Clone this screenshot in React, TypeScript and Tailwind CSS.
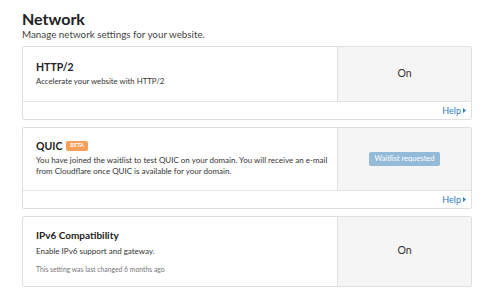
import { ReactNode } from 'react';

interface SettingCardProps {
  title: ReactNode;
  children: ReactNode;
  control: ReactNode;
  help?: boolean;
  rowHeight: string;
}

const HelpLink = () => (
  <div className="flex justify-end border-t border-[#e3e3e3] h-[18px] items-center pr-[5px]">
    <a className="text-[9px] text-[#2f7bbf] flex items-center gap-[2px] leading-none">
      Help
      <svg width="3" height="5" viewBox="0 0 3 5">
        <path d="M0 0 L3 2.5 L0 5 Z" fill="#2f7bbf" />
      </svg>
    </a>
  </div>
);

const SettingCard = ({ title, children, control, help = true, rowHeight }: SettingCardProps) => (
  <div className="border border-[#e0e0e0] rounded-[2px] bg-white">
    <div className={`flex ${rowHeight}`}>
      <div className="flex-1 pl-[13px] pr-2 flex flex-col justify-center">
        {title}
        {children}
      </div>
      <div className="w-[134px] border-l border-[#e0e0e0] bg-[#f5f5f5] flex items-center justify-center">
        {control}
      </div>
    </div>
    {help && <HelpLink />}
  </div>
);

const App = () => {
  return (
    <div className="w-[500px] h-[289px] overflow-hidden bg-white font-['Lato',sans-serif] text-[#333]">
      <div className="pl-[22px] w-[472px]">
        <h1 className="text-[16px] font-bold leading-none pt-[11px] text-[#222]">Network</h1>
        <p className="text-[9.8px] leading-none mt-[3px] text-[#444]">Manage network settings for your website.</p>

        <div className="mt-[6px] flex flex-col gap-[7px]">
          <SettingCard
            rowHeight="h-[54px]"
            title={<h2 className="text-[10.5px] font-bold leading-none text-[#222]">HTTP/2</h2>}
            control={<span className="text-[10.5px] text-[#333]">On</span>}
          >
            <p className="text-[7.8px] mt-[6px] leading-none">Accelerate your website with HTTP/2</p>
          </SettingCard>

          <SettingCard
            rowHeight="h-[62px]"
            title={
              <div className="flex items-center gap-[4px]">
                <h2 className="text-[10.5px] font-bold leading-none text-[#222]">QUIC</h2>
                <span className="bg-[#f59f5b] text-white text-[5.5px] font-bold leading-none px-[4px] h-[10px] flex items-center rounded-[2px]">
                  BETA
                </span>
              </div>
            }
            control={
              <button className="bg-[#93bad8] text-white text-[7.5px] leading-none px-[6px] h-[14px] rounded-[2px]">
                Waitlist requested
              </button>
            }
          >
            <p className="text-[8px] leading-[11px] mt-[4px] whitespace-nowrap">
              You have joined the waitlist to test QUIC on your domain. You will receive an e-mail
              <br />
              from Cloudflare once QUIC is available for your domain.
            </p>
          </SettingCard>

          <SettingCard
            rowHeight="h-[69px]"
            help={false}
            title={<h2 className="text-[10px] font-bold leading-none text-[#222]">IPv6 Compatibility</h2>}
            control={<span className="text-[10.5px] text-[#333]">On</span>}
          >
            <p className="text-[8px] leading-none mt-[7px]">Enable IPv6 support and gateway.</p>
            <p className="text-[6.8px] leading-none mt-[11px] text-[#777]">This setting was last changed 6 months ago</p>
          </SettingCard>
        </div>
      </div>
    </div>
  );
};

export default App;
